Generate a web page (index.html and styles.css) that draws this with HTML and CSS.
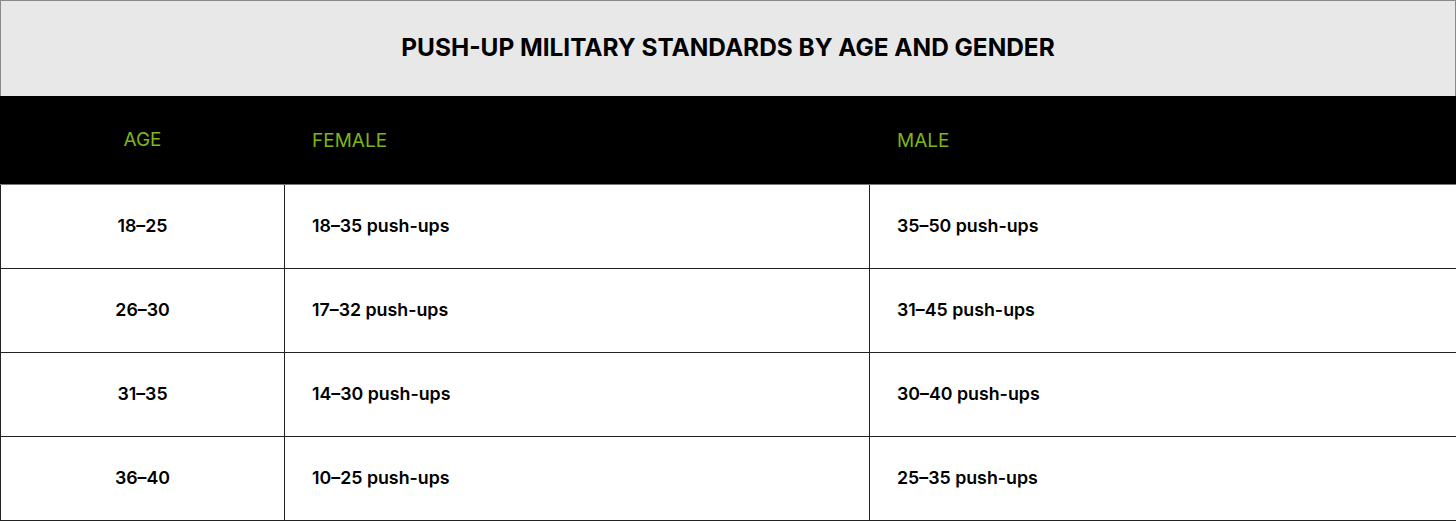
FILE: index.html
```html
<!DOCTYPE html>
<html lang="en">
<head>
<meta charset="utf-8">
<title>Push-up military standards</title>
<link rel="stylesheet" href="styles.css">
</head>
<body>
<div class="wrap">
  <div class="title">PUSH-UP MILITARY STANDARDS BY AGE AND GENDER</div>
  <table class="standards">
    <colgroup>
      <col class="c-age">
      <col class="c-f">
      <col class="c-m">
    </colgroup>
    <thead>
      <tr><th class="age">AGE</th><th>FEMALE</th><th>MALE</th></tr>
    </thead>
    <tbody>
      <tr><td class="age">18–25</td><td>18–35 push-ups</td><td>35–50 push-ups</td></tr>
      <tr><td class="age">26–30</td><td>17–32 push-ups</td><td>31–45 push-ups</td></tr>
      <tr><td class="age">31–35</td><td>14–30 push-ups</td><td>30–40 push-ups</td></tr>
      <tr><td class="age">36–40</td><td>10–25 push-ups</td><td>25–35 push-ups</td></tr>
    </tbody>
  </table>
</div>
</body>
</html>
```
FILE: styles.css
```css
html, body {
  margin: 0;
  padding: 0;
  background: #ffffff;
}
body {
  font-family: Inter, "Noto Sans", "Liberation Sans", sans-serif;
  color: #000;
}
.wrap {
  width: 1456px;
}
.title {
  box-sizing: border-box;
  height: 96px;
  background: #e8e8e8;
  border: 1px solid #8a8a8a;
  border-bottom: none;
  display: flex;
  align-items: center;
  justify-content: center;
  font-weight: 700;
  font-size: 24.4px;
  letter-spacing: 0;
  padding-bottom: 3px;
}
.standards {
  width: 1456px;
  border-collapse: collapse;
  table-layout: fixed;
}
.c-age { width: 284px; }
.c-f { width: 585px; }
.c-m { width: 587px; }
.standards th {
  background: #000;
  color: #7cb518;
  font-weight: 400;
  font-size: 19px;
  text-align: left;
  height: 88px;
  padding: 0 0 0 27px;
  box-sizing: border-box;
  border: 1px solid #000;
  border-bottom: 1px solid #777;
}
.standards td {
  height: 84px;
  box-sizing: border-box;
  border: 1px solid #222;
  font-weight: 600;
  font-size: 17.8px;
  padding: 0 0 2px 27px;
}
.standards .age {
  text-align: center;
  padding: 0 0 2px 0;
}
```
